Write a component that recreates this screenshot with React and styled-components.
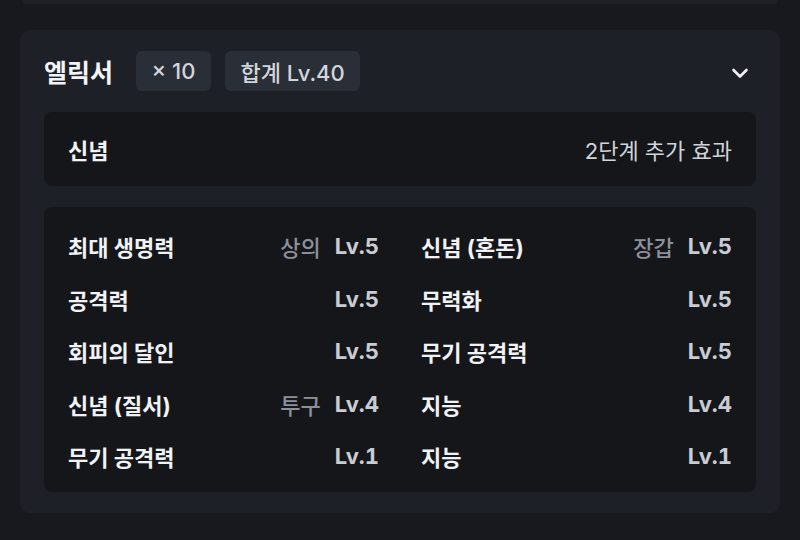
import React from "react";
import styled, { createGlobalStyle } from "styled-components";

const Global = createGlobalStyle`
  html, body { margin: 0; padding: 0; background: #17191e; }
  body {
    font-family: "Inter", "Noto Sans CJK KR", "Noto Sans", sans-serif;
    color: #f1f2f4;
    -webkit-font-smoothing: antialiased;
  }
`;

const Page = styled.div`
  width: 800px;
  height: 540px;
  box-sizing: border-box;
  padding: 0 20px;
  display: flex;
  flex-direction: column;
  gap: 26px;
  overflow: hidden;
`;

const PrevCard = styled.div`
  height: 4px;
  margin: 0 2px;
  background: #1e2027;
  border-radius: 0 0 10px 10px;
`;

const Card = styled.section`
  background: #1e2027;
  border-radius: 10px;
  padding: 21px 24px 21px;
  display: flex;
  flex-direction: column;
  gap: 21px;
`;

const Header = styled.div`
  display: flex;
  align-items: center;
  height: 40px;
`;

const Title = styled.h2`
  margin: 0 23px 0 0;
  font-size: 25px;
  font-weight: 700;
  color: #f3f4f6;
`;

const Badge = styled.span`
  display: inline-flex;
  align-items: center;
  height: 40px;
  box-sizing: border-box;
  padding: 0 15.5px;
  margin-right: 14px;
  background: #2a2e37;
  border-radius: 6px;
  font-size: 22px;
  font-weight: 500;
  color: #d2d5dc;
`;

const Toggle = styled.button`
  margin-left: auto;
  margin-right: 4px;
  margin-top: 3px;
  background: none;
  border: 0;
  padding: 0;
  width: 24px;
  height: 24px;
  display: flex;
  align-items: center;
  justify-content: center;
  color: #f1f2f4;
`;

const Box = styled.div`
  background: #14161a;
  border-radius: 8px;
`;

const SetRow = styled(Box)`
  height: 74px;
  box-sizing: border-box;
  padding: 0 24px;
  display: flex;
  align-items: center;
  justify-content: space-between;
`;

const SetName = styled.span`
  font-size: 22px;
  font-weight: 700;
  color: #f1f2f4;
`;

const SetNote = styled.span`
  font-size: 22px;
  font-weight: 400;
  color: #d0d3d9;
`;

const Grid = styled(Box)`
  padding: 24px 24px 21px;
  display: grid;
  grid-template-columns: 1fr 1fr;
  column-gap: 42px;
  row-gap: 22.5px;
`;

const Stat = styled.div`
  display: flex;
  align-items: center;
  height: 30px;
`;

const StatName = styled.span`
  font-size: 22px;
  font-weight: 700;
  color: #f1f2f4;
  flex: 1;
  white-space: nowrap;
`;

const Slot = styled.span`
  font-size: 22px;
  font-weight: 500;
  color: #8c9099;
  margin-right: 14px;
`;

const Level = styled.span`
  font-size: 22px;
  font-weight: 700;
  color: #c9ccd3;
  font-variant-numeric: tabular-nums;
`;

const stats = [
  { name: "최대 생명력", slot: "상의", lv: 5 },
  { name: "신념 (혼돈)", slot: "장갑", lv: 5 },
  { name: "공격력", lv: 5 },
  { name: "무력화", lv: 5 },
  { name: "회피의 달인", lv: 5 },
  { name: "무기 공격력", lv: 5 },
  { name: "신념 (질서)", slot: "투구", lv: 4 },
  { name: "지능", lv: 4 },
  { name: "무기 공격력", lv: 1 },
  { name: "지능", lv: 1 },
];

export default function App() {
  return (
    <>
      <Global />
      <Page>
        <PrevCard />
        <Card>
          <Header>
            <Title>엘릭서</Title>
            <Badge>× 10</Badge>
            <Badge>합계 Lv.40</Badge>
            <Toggle aria-label="접기">
              <svg width="18" height="12" viewBox="0 0 18 12" fill="none">
                <path d="M2.5 3 L9 9.5 L15.5 3" stroke="currentColor" strokeWidth="2.6" strokeLinecap="round" strokeLinejoin="round" />
              </svg>
            </Toggle>
          </Header>
          <SetRow>
            <SetName>신념</SetName>
            <SetNote>2단계 추가 효과</SetNote>
          </SetRow>
          <Grid>
            {stats.map((s, i) => (
              <Stat key={i}>
                <StatName>{s.name}</StatName>
                {s.slot && <Slot>{s.slot}</Slot>}
                <Level>Lv.{s.lv}</Level>
              </Stat>
            ))}
          </Grid>
        </Card>
      </Page>
    </>
  );
}
